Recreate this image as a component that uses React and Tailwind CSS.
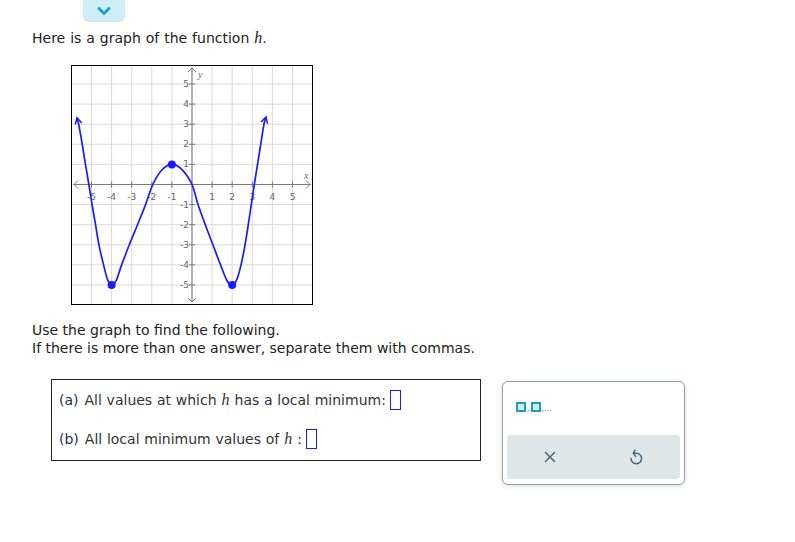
import React from "react"

const U = 20.1
const OX = 120
const OY = 118.5
const px = (x) => OX + x * U
const py = (y) => OY - y * U

const curve = [
  [-5.72, 3.32], [-5.64, 3], [-5.46, 2], [-5.3, 1], [-5.13, 0], [-4.97, -1], [-4.8, -2],
  [-4.63, -3], [-4.4, -4], [-4.2, -4.73], [-4, -5], [-3.78, -4.8], [-3.5, -4], [-3.12, -3],
  [-2.71, -2], [-2.31, -1], [-1.95, 0], [-1.5, 0.72], [-1, 1], [-0.5, 0.74], [0, 0],
  [0.3, -1], [0.66, -2], [1.04, -3], [1.42, -4], [1.75, -4.8], [2, -5], [2.22, -4.75],
  [2.44, -4], [2.64, -3], [2.8, -2], [2.95, -1], [3.1, 0], [3.26, 1], [3.42, 2], [3.58, 3],
  [3.68, 3.36],
]

function splinePath(points) {
  const p = points.map(([x, y]) => [px(x), py(y)])
  let d = `M${p[0][0].toFixed(2)} ${p[0][1].toFixed(2)}`
  for (let i = 0; i < p.length - 1; i++) {
    const a = p[i - 1] || p[i]
    const b = p[i]
    const c = p[i + 1]
    const e = p[i + 2] || c
    const c1 = [b[0] + (c[0] - a[0]) / 6, b[1] + (c[1] - a[1]) / 6]
    const c2 = [c[0] - (e[0] - b[0]) / 6, c[1] - (e[1] - b[1]) / 6]
    d += ` C${c1[0].toFixed(2)} ${c1[1].toFixed(2)} ${c2[0].toFixed(2)} ${c2[1].toFixed(2)} ${c[0].toFixed(2)} ${c[1].toFixed(2)}`
  }
  return d
}

function arrowHead(tip, from, len = 7, spread = 0.5) {
  const tx = px(tip[0]), ty = py(tip[1])
  const ang = Math.atan2(ty - py(from[1]), tx - px(from[0]))
  const a1 = ang + Math.PI - spread
  const a2 = ang + Math.PI + spread
  return `M${tx + len * Math.cos(a1)} ${ty + len * Math.sin(a1)} L${tx} ${ty} L${tx + len * Math.cos(a2)} ${ty + len * Math.sin(a2)}`
}

const ticks = [-5, -4, -3, -2, -1, 1, 2, 3, 4, 5]

function Graph() {
  const n = curve.length
  return (
    <svg width="240" height="238" viewBox="0 0 240 238" className="block">
      {[-5, -4, -3, -2, -1, 0, 1, 2, 3, 4, 5].map((k) => (
        <g key={k}>
          <line x1={px(k)} y1="0" x2={px(k)} y2="238" stroke="#d9d9d9" strokeWidth="1" />
          <line x1="0" y1={py(k)} x2="240" y2={py(k)} stroke="#d9d9d9" strokeWidth="1" />
        </g>
      ))}
      {/* axes */}
      <line x1="2" y1={OY} x2="238" y2={OY} stroke="#7a7a7a" strokeWidth="1" />
      <line x1={OX} y1="2" x2={OX} y2="236" stroke="#7a7a7a" strokeWidth="1" />
      <path d={`M6 ${OY - 4} L2 ${OY} L6 ${OY + 4}`} fill="none" stroke="#7a7a7a" />
      <path d={`M234 ${OY - 4} L238 ${OY} L234 ${OY + 4}`} fill="none" stroke="#7a7a7a" />
      <path d={`M${OX - 4} 6 L${OX} 2 L${OX + 4} 6`} fill="none" stroke="#7a7a7a" />
      <path d={`M${OX - 4} 232 L${OX} 236 L${OX + 4} 232`} fill="none" stroke="#7a7a7a" />
      {ticks.map((k) => (
        <g key={k}>
          <line x1={px(k)} y1={OY - 3} x2={px(k)} y2={OY + 3} stroke="#7a7a7a" />
          <line x1={OX - 3} y1={py(k)} x2={OX + 3} y2={py(k)} stroke="#7a7a7a" />
          <text x={px(k)} y={OY + 15} textAnchor="middle" fontSize="9" fill="#666" fontFamily="DejaVu Sans, sans-serif">{k}</text>
          <text x={OX - 3} y={py(k) + 3} textAnchor="end" fontSize="9" fill="#666" fontFamily="DejaVu Sans, sans-serif">{k}</text>
        </g>
      ))}
      <text x={OX + 6} y="12" fontSize="10" fill="#666" fontStyle="italic" fontFamily="Liberation Serif, serif">y</text>
      <text x="232" y={OY - 6} fontSize="10" fill="#666" fontStyle="italic" fontFamily="Liberation Serif, serif">x</text>
      {/* curve */}
      <path d={splinePath(curve)} fill="none" stroke="#1a1aff" strokeWidth="1.7" strokeLinejoin="round" />
      <path d={arrowHead(curve[0], curve[1])} fill="none" stroke="#1a1aff" strokeWidth="1.5" />
      <path d={arrowHead(curve[n - 1], curve[n - 2])} fill="none" stroke="#1a1aff" strokeWidth="1.5" />
      <circle cx={px(-4)} cy={py(-5)} r="4" fill="#1a1aff" />
      <circle cx={px(-1)} cy={py(1)} r="4" fill="#1a1aff" />
      <circle cx={px(2)} cy={py(-5)} r="4" fill="#1a1aff" />
    </svg>
  )
}

function H() {
  return <span className="font-['Liberation_Serif',serif] italic text-[16px]">h</span>
}

function InputBox() {
  return <span className="inline-block w-[11px] h-[20px] border-[1.5px] border-[#1a1aff] ml-[4px] align-middle" />
}

export default function App() {
  return (
    <div className="w-[795px] h-[542px] bg-white font-['DejaVu_Sans',sans-serif] text-[14px] text-[#222] overflow-hidden">
      <div className="pl-[83px]">
        <button className="w-[42px] h-[22px] rounded-b-[6px] bg-[#cdeef6] flex items-center justify-center">
          <svg width="14" height="10" viewBox="0 0 14 10">
            <polyline points="2,2.5 7,7.5 12,2.5" fill="none" stroke="#1aa2c6" strokeWidth="2.8" strokeLinecap="round" strokeLinejoin="round" />
          </svg>
        </button>
      </div>
      <p className="ml-[32px] mt-[7px] leading-[17px] [word-spacing:0.5px]">
        Here is a graph of the function <H />.
      </p>
      <div className="ml-[71px] mt-[18px] w-[242px] h-[240px] border border-black">
        <Graph />
      </div>
      <div className="ml-[32px] mt-[17px] leading-[17.5px]">
        <p>Use the graph to find the following.</p>
        <p>If there is more than one answer, separate them with commas.</p>
      </div>
      <div className="flex mt-[22px] ml-[51px]">
        <div className="w-[430px] h-[82px] border border-[#222] pl-[7px] pt-[9px] flex flex-col gap-[17px] text-[#333] [word-spacing:0.3px]">
          <div className="h-[22px] flex items-center">
            <span className="text-[#1c2f4f]">(a)</span>
            <span className="ml-[6px]">All values at which</span>
            <span className="mx-[5px]"><H /></span>
            <span>has a local minimum:</span>
            <InputBox />
          </div>
          <div className="h-[22px] flex items-center">
            <span className="text-[#1c2f4f]">(b)</span>
            <span className="ml-[6px]">All local minimum values of</span>
            <span className="mx-[5px]"><H /></span>
            <span>:</span>
            <InputBox />
          </div>
        </div>
        <div className="ml-[21px] mt-[2px] w-[183px] h-[104px] border border-[#8fa1a7] rounded-[6px] bg-white shadow-[0_1px_5px_rgba(0,0,0,0.15)] flex flex-col">
          <div className="h-[53px] pl-[13px] pt-[20px] flex items-start">
            <div className="flex items-end">
              <span className="w-[10px] h-[10px] border-2 border-[#1a9fb5] bg-[#cdeef5]" />
              <span className="text-[8px] leading-[6px] text-[#888] mx-[1px]">,</span>
              <span className="w-[10px] h-[10px] border-2 border-[#1a9fb5] bg-[#cdeef5]" />
              <span className="text-[8px] leading-[6px] text-[#888] ml-[1px]">,...</span>
            </div>
          </div>
          <div className="mx-[4px] mb-[4px] h-[44px] rounded-[4px] bg-[#dfe6e8] flex items-center">
            <div className="w-[86px] flex justify-center">
              <svg width="12" height="12" viewBox="0 0 12 12">
                <path d="M1.5 1.5 L10.5 10.5 M10.5 1.5 L1.5 10.5" stroke="#4b6670" strokeWidth="1.5" strokeLinecap="round" />
              </svg>
            </div>
            <div className="w-[86px] flex justify-center">
              <svg width="14" height="17" viewBox="0 0 14 17">
                <path d="M2 9.5 A5.3 5.3 0 1 0 7.3 4.2 L4.3 4.2 M4.3 4.2 L6.8 7.4 M4.3 4.2 L6 1" fill="none" stroke="#4b6670" strokeWidth="1.5" strokeLinecap="round" strokeLinejoin="round" />
              </svg>
            </div>
          </div>
        </div>
      </div>
    </div>
  )
}
